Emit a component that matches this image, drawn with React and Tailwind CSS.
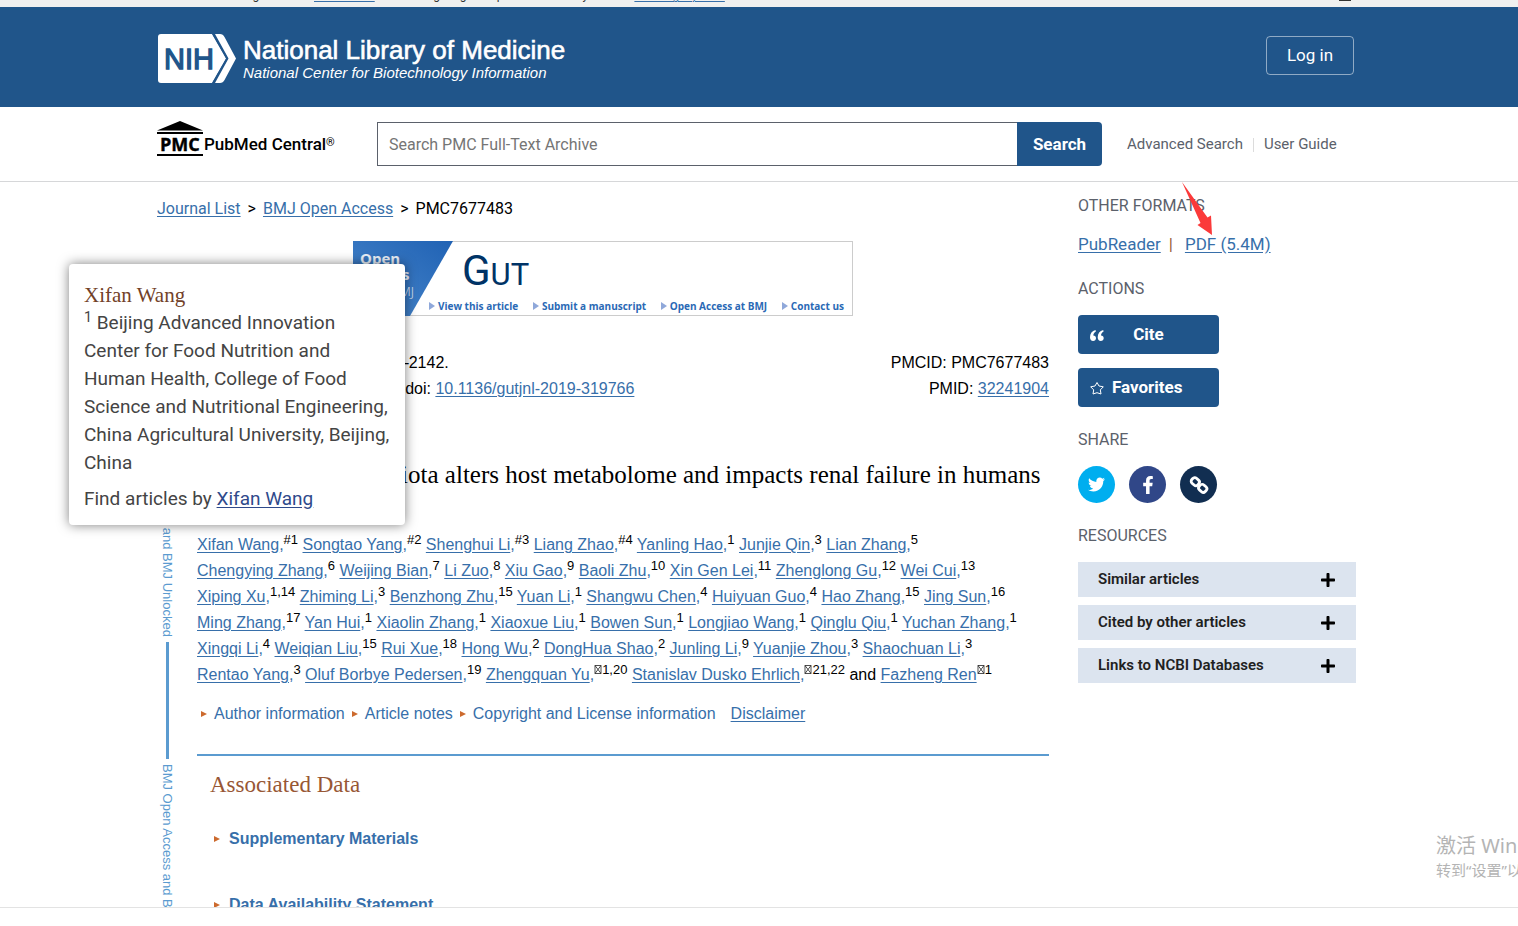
import React, { useState } from 'react';
import { FaTwitter, FaFacebookF, FaPlus } from 'react-icons/fa';

const mail = true;

const authors = [
  { name: 'Xifan Wang', note: '#1' },
  { name: 'Songtao Yang', note: '#2' },
  { name: 'Shenghui Li', note: '#3' },
  { name: 'Liang Zhao', note: '#4' },
  { name: 'Yanling Hao', note: '1' },
  { name: 'Junjie Qin', note: '3' },
  { name: 'Lian Zhang', note: '5' },
  { name: 'Chengying Zhang', note: '6' },
  { name: 'Weijing Bian', note: '7' },
  { name: 'Li Zuo', note: '8' },
  { name: 'Xiu Gao', note: '9' },
  { name: 'Baoli Zhu', note: '10' },
  { name: 'Xin Gen Lei', note: '11' },
  { name: 'Zhenglong Gu', note: '12' },
  { name: 'Wei Cui', note: '13' },
  { name: 'Xiping Xu', note: '1,14' },
  { name: 'Zhiming Li', note: '3' },
  { name: 'Benzhong Zhu', note: '15' },
  { name: 'Yuan Li', note: '1' },
  { name: 'Shangwu Chen', note: '4' },
  { name: 'Huiyuan Guo', note: '4' },
  { name: 'Hao Zhang', note: '15' },
  { name: 'Jing Sun', note: '16' },
  { name: 'Ming Zhang', note: '17' },
  { name: 'Yan Hui', note: '1' },
  { name: 'Xiaolin Zhang', note: '1' },
  { name: 'Xiaoxue Liu', note: '1' },
  { name: 'Bowen Sun', note: '1' },
  { name: 'Longjiao Wang', note: '1' },
  { name: 'Qinglu Qiu', note: '1' },
  { name: 'Yuchan Zhang', note: '1' },
  { name: 'Xingqi Li', note: '4' },
  { name: 'Weiqian Liu', note: '15' },
  { name: 'Rui Xue', note: '18' },
  { name: 'Hong Wu', note: '2' },
  { name: 'DongHua Shao', note: '2' },
  { name: 'Junling Li', note: '9' },
  { name: 'Yuanjie Zhou', note: '3' },
  { name: 'Shaochuan Li', note: '3' },
  { name: 'Rentao Yang', note: '3' },
  { name: 'Oluf Borbye Pedersen', note: '19' },
  { name: 'Zhengquan Yu', note: '1,20', mail },
  { name: 'Stanislav Dusko Ehrlich', note: '21,22', mail }
];

const resources = ['Similar articles', 'Cited by other articles', 'Links to NCBI Databases'];
const bannerLinks = ['View this article', 'Submit a manuscript', 'Open Access at BMJ', 'Contact us'];

const Link = ({ children, className = '' }) => (
  <a href="#" className={`text-[#376faa] underline underline-offset-2 ${className}`}>
    {children}
  </a>
);

const MailMark = () => (
  <svg className="inline-block align-baseline" width="8" height="9" viewBox="0 0 8 9" fill="none" stroke="#222" strokeWidth="0.8">
    <path d="M1 0.5h6v8H1zM1 0.5l6 8M7 0.5l-6 8" />
  </svg>
);

const Arrow = () => (
  <svg width="6" height="6" viewBox="0 0 6 6" className="shrink-0 fill-[#cc6a2e]">
    <path d="M0 0L6 3L0 6z" />
  </svg>
);

const QuoteIcon = () => (
  <svg width="14" height="14" viewBox="0 0 14 14" fill="#fff" className="shrink-0">
    <path d="M5.500 2C2 3 0 5.500 0 9.200C0 11.600 1.200 13 3.100 13C4.800 13 6 11.800 6 10.200C6 8.600 4.900 7.500 3.300 7.500C3.400 5.800 4.200 4.600 5.900 3.600z" />
    <path d="M13.200 2C9.700 3 7.700 5.500 7.700 9.200C7.700 11.600 8.900 13 10.800 13C12.500 13 13.700 11.800 13.700 10.200C13.700 8.600 12.600 7.500 11 7.500C11.100 5.800 11.900 4.600 13.600 3.600z" />
  </svg>
);

const StarIcon = () => (
  <svg width="14" height="14" viewBox="0 0 14 14" fill="none" stroke="#fff" strokeLinejoin="round" className="shrink-0">
    <path d="M7 1.500L9 5L13.300 5.800L10.300 8.900L11 13L7 11.700L3 13L3.700 8.900L0.700 5.800L5 5z" />
  </svg>
);

const ChainIcon = () => (
  <svg width="20" height="20" viewBox="0 0 20 20" fill="none" stroke="#fff" strokeWidth="2.800">
    <g transform="rotate(42 10 10)">
      <rect x="1" y="6.700" width="8" height="6.600" rx="2.600" />
      <rect x="11" y="6.700" width="8" height="6.600" rx="2.600" />
    </g>
  </svg>
);

const NlmLogo = () => (
  <svg width="415" height="52" viewBox="0 -3 415 52" role="img" aria-label="National Library of Medicine">
    <path d="M4 0H55L69 24.500L55 49H4Q1 49 1 46V3Q1 0 4 0z" fill="#fff" />
    <path d="M58 0H63Q66 0 67.500 3L79 24.500L67.500 46Q66 49 63 49H58L71.500 24.500z" fill="#fff" />
    <path d="M56 0L70 24.500L56 49" fill="none" stroke="#20558a" strokeWidth="1.500" />
    <text x="7" y="35" fontFamily="Liberation Sans" fontSize="29" fill="#20558a" stroke="#20558a" strokeWidth="1.300">NIH</text>
    <text x="86" y="25" fontFamily="Liberation Sans" fontSize="26" fill="#fff" stroke="#fff" strokeWidth="0.600">National Library of Medicine</text>
    <text x="86" y="44" fontFamily="Liberation Sans" fontSize="15" fontStyle="italic" fill="#fff">National Center for Biotechnology Information</text>
  </svg>
);

const PmcLogo = () => (
  <svg width="180" height="46" viewBox="0 0 180 46" role="img" aria-label="PubMed Central">
    <path d="M0 9.500L23 0L46 9.500zM0 11h46v2H0zM0 33h46v2H0z" />
    <text x="3" y="30" fontFamily="Open Sans" fontWeight="700" fontSize="18" stroke="#000" strokeWidth="0.400">PMC</text>
    <text x="47" y="29" fontFamily="Roboto" fontWeight="500" fontSize="17">PubMed Central</text>
    <text x="169" y="25" fontFamily="Roboto" fontSize="11">®</text>
  </svg>
);

const Header = () => (
  <>
    {/* Announcement strip, scrolled mostly out of view */}
    <div className="h-[7px] shrink-0 bg-[#f0f0f0] overflow-hidden">
      <div className="h-full max-w-[1204px] mx-auto pr-[10px] flex justify-between items-end">
        <p className="pl-[13px] text-[12px] leading-6 text-[#333] whitespace-nowrap">
          Meet the redesigned PMC. <Link>Learn more</Link> about navigating our updated article layout. The{' '}
          <Link>PMC legacy view</Link>
        </p>
        <span className="w-3 h-px self-start bg-[#333]"></span>
      </div>
    </div>

    <header className="h-[100px] shrink-0 bg-[#20558a]">
      <div className="h-full max-w-[1204px] mx-auto pr-[7px] flex items-center justify-between">
        <a href="#"><NlmLogo /></a>
        <button className="w-[88px] h-[39px] mb-[3px] border border-white/50 rounded text-white text-[17px]">Log in</button>
      </div>
    </header>

    <div className="shrink-0 border-b border-[#d6d7d9]">
      <div className="h-[74px] max-w-[1204px] mx-auto flex items-center">
        <a href="#" className="w-[220px] shrink-0"><PmcLogo /></a>
        <form className="flex w-full max-w-[725px]" onSubmit={(e) => e.preventDefault()}>
          <input
            type="text"
            aria-label="Search PMC Full-Text Archive"
            placeholder="Search PMC Full-Text Archive"
            className="flex-1 min-w-0 h-11 px-[11px] border border-r-0 border-[#5b616b] text-base placeholder:text-[#757575]"
          />
          <button className="w-[85px] h-11 pt-px rounded-r bg-[#20558a] text-white text-[17px] font-bold">Search</button>
        </form>
        <nav className="ml-[25px] pt-px flex items-center gap-[10px] text-[15px] text-[#5b616b] whitespace-nowrap">
          <a href="#">Advanced Search</a>
          <span className="w-px h-[14px] bg-[#dcdcdc]"></span>
          <a href="#">User Guide</a>
        </nav>
      </div>
    </div>
  </>
);

const JournalBanner = () => (
  <div className="relative w-[500px] h-[75px] mx-auto mt-5 border border-[#ccc] font-['Open_Sans']">
    <svg className="absolute -left-px -top-px" width="101" height="75" viewBox="0 0 101 75">
      <defs>
        <linearGradient id="bmj" x1="0" y1="1" x2="1" y2="0">
          <stop offset="0" stopColor="#4a88cc" />
          <stop offset="1" stopColor="#2062b4" />
        </linearGradient>
      </defs>
      <path d="M0 0H100L57 75H0z" fill="url(#bmj)" />
    </svg>
    <p className="absolute left-[6px] top-2 text-[15px] leading-4 font-bold text-white/90">
      Open<br />Access<br /><span className="text-[13px] leading-4 font-light">from BMJ</span>
    </p>
    <div className="h-full pl-[75px] pr-2 flex flex-col">
      <p className="h-[55px] pl-[33px] pt-1 font-['Roboto'] leading-[50px] text-[#036]">
        <span className="text-[42px]">G</span><span className="text-[31px]">UT</span>
      </p>
      <ul className="h-[18px] flex items-center justify-between text-[10px] leading-4 font-bold text-[#2a69b5] whitespace-nowrap">
        {bannerLinks.map((item) => (
          <li key={item}>
            <a href="#" className="flex items-center gap-[3px]">
              <svg width="6" height="8" viewBox="0 0 6 8" fill="#8fa8da"><path d="M0 0L6 4L0 8z" /></svg>
              {item}
            </a>
          </li>
        ))}
      </ul>
    </div>
  </div>
);

const SideStrip = () => (
  <div className="w-5 mr-5 h-0 shrink-0 flex flex-col items-center gap-[5px] text-[13px] leading-5 text-[#5b9bd0] whitespace-nowrap">
    <span className="w-[3px] h-[97px] shrink-0 bg-[#5b9bd0]"></span>
    <span className="[writing-mode:vertical-rl]">BMJ Open Access and BMJ Unlocked</span>
    <span className="w-[3px] h-[117px] shrink-0 bg-[#5b9bd0]"></span>
    <span className="[writing-mode:vertical-rl]">BMJ Open Access and BMJ Unlocked</span>
  </div>
);

const AuthorPopup = () => (
  <div className="absolute z-10 -left-[88px] top-[82px] w-[336px] px-[15px] pt-[17px] pb-3 bg-white rounded shadow-[0_0_12px_rgba(0,0,0,0.5)] font-['Roboto'] text-[19px] leading-7 text-[#444]">
    <h3 className="font-['Liberation_Serif'] text-[21px] leading-7 text-[#724128]">Xifan Wang</h3>
    <p>
      <sup>1</sup> Beijing Advanced Innovation Center for Food Nutrition and Human Health, College of Food
      Science and Nutritional Engineering, China Agricultural University, Beijing, China
    </p>
    <p className="mt-2">
      Find articles by <a href="#" className="text-[#2f4a8b] underline underline-offset-2">Xifan Wang</a>
    </p>
  </div>
);

const Article = () => (
  <main className="relative flex-1 min-w-0 pt-[15px]">
    <nav className="flex gap-[7px] font-['Roboto'] text-base leading-6">
      <Link>Journal List</Link>
      <span>&gt;</span>
      <Link>BMJ Open Access</Link>
      <span>&gt;</span>
      <span>PMC7677483</span>
    </nav>

    <JournalBanner />

    <div className="flex">
      <SideStrip />
      <article className="flex-1 min-w-0 text-base leading-[26px]">
        <div className="mt-[34px] flex justify-between">
          <div>
            <p>Gut. 2020 Dec; 69(12): 2131–2142.</p>
            <p>Published online 2020 Apr 2. doi: <Link>10.1136/gutjnl-2019-319766</Link></p>
          </div>
          <div className="text-right">
            <p>PMCID: PMC7677483</p>
            <p>PMID: <Link>32241904</Link></p>
          </div>
        </div>

        <h1 className="mt-[58px] font-['Liberation_Serif'] text-[25px] leading-[30px]">
          Aberrant gut microbiota alters host metabolome and impacts renal failure in humans and rodents
        </h1>

        <p className="mt-3">
          {authors.map((a) => (
            <React.Fragment key={a.name}>
              <span className="whitespace-nowrap">
                <Link>{a.name}</Link>
                <span className="text-[#376faa]">,</span>
                <sup className="text-[13px]">{a.mail && <MailMark />}{a.note}</sup>
              </span>{' '}
            </React.Fragment>
          ))}
          and <Link>Fazheng Ren</Link><sup className="text-[13px]"><MailMark />1</sup>
        </p>

        <div className="mt-[13px] pl-1 flex items-center gap-[7px] text-[#376faa]">
          <Arrow /><a href="#">Author information</a>
          <Arrow /><a href="#">Article notes</a>
          <Arrow /><a href="#">Copyright and License information</a>
          <Link className="ml-2">Disclaimer</Link>
        </div>

        <section className="mt-[27px] pl-[13px] border-t-2 border-[#5b9bd0]">
          <h2 className="mt-[14px] font-['Liberation_Serif'] text-[23px] leading-[30px] text-[#985735]">Associated Data</h2>
          <div className="mt-[26px] pl-1 flex flex-col gap-10 font-bold text-[#376faa]">
            <a href="#" className="flex items-center gap-[9px]"><Arrow />Supplementary Materials</a>
            <a href="#" className="flex items-center gap-[9px]"><Arrow />Data Availability Statement</a>
          </div>
        </section>
      </article>
    </div>

    <AuthorPopup />
  </main>
);

const SideSection = ({ title, children }) => (
  <section className="flex flex-col gap-[14px]">
    <h2 className="text-base leading-6 uppercase text-[#5b616b]">{title}</h2>
    {children}
  </section>
);

const Sidebar = () => {
  const [favorite, setFavorite] = useState(false);

  return (
    <aside className="relative w-[278px] shrink-0 pt-3 flex flex-col gap-[21px] font-['Roboto']">
      <SideSection title="Other formats">
        <p className="text-[17px] leading-6">
          <Link>PubReader</Link>
          <span className="mx-2 text-[#985735]">|</span>
          <Link className="ml-1">PDF (5.4M)</Link>
        </p>
      </SideSection>

      <SideSection title="Actions">
        <button className="w-[141px] h-[39px] px-3 flex items-center rounded bg-[#20558a] text-white text-[17px] font-bold">
          <QuoteIcon />
          <span className="flex-1 pr-7 pl-[14px] text-center">Cite</span>
        </button>
        <button
          onClick={() => setFavorite(!favorite)}
          aria-pressed={favorite}
          className="w-[141px] h-[39px] px-3 flex items-center gap-2 rounded bg-[#20558a] text-white text-[17px] font-bold"
        >
          <StarIcon />
          Favorites
        </button>
      </SideSection>

      <SideSection title="Share">
        <div className="flex gap-[14px] text-white">
          <button aria-label="Share on Twitter" className="w-[37px] h-[37px] rounded-full bg-[#00aeef] flex items-center justify-center">
            <FaTwitter size={17} />
          </button>
          <button aria-label="Share on Facebook" className="w-[37px] h-[37px] rounded-full bg-[#304788] flex items-center justify-center">
            <FaFacebookF size={18} />
          </button>
          <button aria-label="Permalink" className="w-[37px] h-[37px] rounded-full bg-[#112e51] flex items-center justify-center">
            <ChainIcon />
          </button>
        </div>
      </SideSection>

      <SideSection title="Resources">
        <div className="flex flex-col gap-2">
          {resources.map((item) => (
            <button key={item} className="h-[35px] pl-5 pr-5 flex items-center justify-between bg-[#dce4ef] text-[15px] font-semibold text-[#212121]">
              {item}
              <FaPlus size={16} className="text-black" />
            </button>
          ))}
        </div>
      </SideSection>

      {/* Red pointer drawn over the PDF link */}
      <svg className="absolute left-[104px] top-0 pointer-events-none" width="31" height="54" viewBox="0 0 31 54">
        <path d="M0 0L25.500 35.500L29 33.500L30 53L15.500 43L18.500 41z" fill="#fb3a3a" />
      </svg>
    </aside>
  );
};

export default function App() {
  return (
    <div className="relative h-screen flex flex-col overflow-hidden bg-white text-black font-['Liberation_Sans',sans-serif]">
      <div className="flex-1 min-h-0 flex flex-col overflow-hidden">
        <div className="shrink-0 font-['Roboto',sans-serif]">
          <Header />
        </div>
        <div className="w-full max-w-[1204px] mx-auto pr-[5px] flex items-start gap-[29px]">
          <Article />
          <Sidebar />
        </div>
      </div>
      <footer className="h-[19px] shrink-0 border-t border-[#e3e3e3]"></footer>

      {/* System activation watermark, cut off by the window edge */}
      <div className="absolute right-0 bottom-11 w-[82px] overflow-hidden whitespace-nowrap font-['Noto_Sans','Noto_Sans_CJK_SC',sans-serif] text-[#b4b4b4]">
        <p className="text-xl leading-6">激活 Windows</p>
        <p className="text-[15px] leading-6">转到“设置”以激活 Windows。</p>
      </div>
    </div>
  );
}
